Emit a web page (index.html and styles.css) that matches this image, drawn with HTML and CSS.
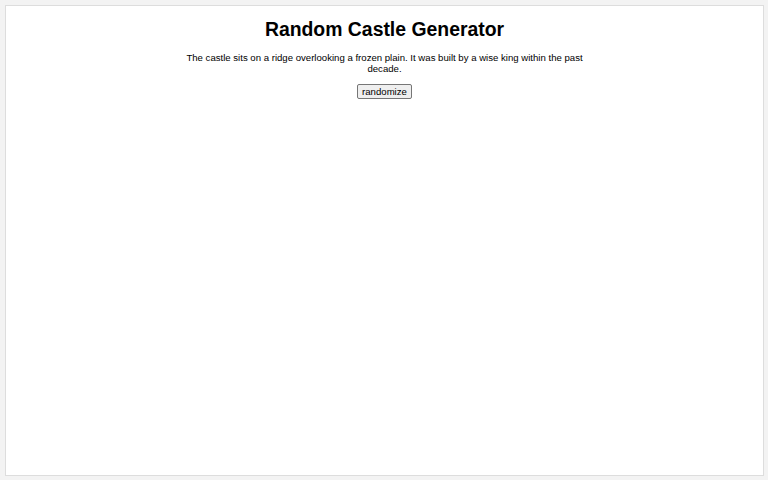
FILE: index.html
```html
<!DOCTYPE html>
<html lang="en">
<head>
  <meta charset="UTF-8">
  <meta name="viewport" content="width=device-width, initial-scale=1.0">
  <title>Random Castle Generator</title>
  <link rel="stylesheet" href="styles.css">
</head>
<body>
  <div class="container">
    <h1>Random Castle Generator</h1>
    <p id="description" class="description">The castle sits on a ridge overlooking a frozen plain. It was built by a wise king within the past decade.</p>
    <button class="randomize">randomize</button>
  </div>
</body>
</html>
```

FILE: styles.css
```css
html, body {
  height: 100%;
}
body {
  font-family: "Liberation Sans", Arial, sans-serif;
  background-color: #f3f3f3;
  color: #000;
  margin: 0;
  padding: 5px 4px 4px 5px;
  box-sizing: border-box;
}
.container {
  background-color: #fff;
  border: 1px solid #ddd;
  height: 100%;
  box-sizing: border-box;
  text-align: center;
  padding-top: 11px;
}
h1 {
  font-size: 19.4px;
  margin: 0 0 11px;
  line-height: 24px;
}
.description {
  font-size: 9.6px;
  line-height: 11px;
  max-width: 400px;
  margin: 0 auto 7px;
}
.randomize {
  font-family: "Liberation Sans", Arial, sans-serif;
  font-size: 9.6px;
  padding: 1px 4px;
  background-color: #efefef;
  border: 1px solid #767676;
  border-radius: 2px;
}
```
